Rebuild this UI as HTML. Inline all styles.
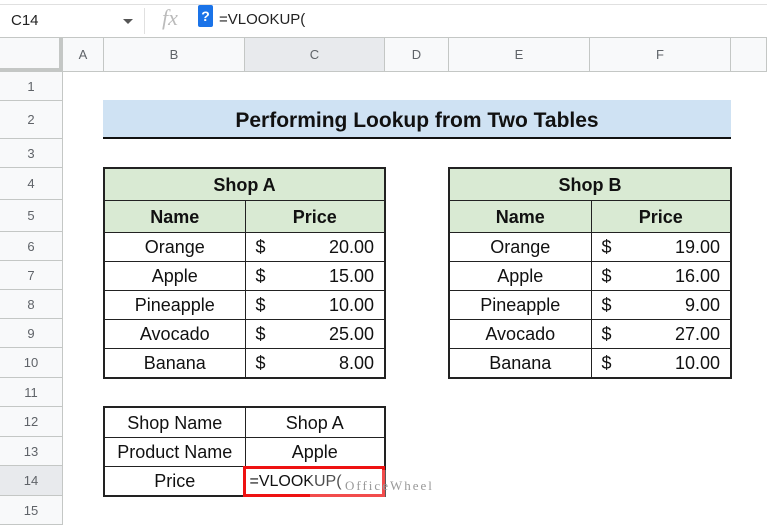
<!DOCTYPE html>
<html><head><style>
*{margin:0;padding:0;box-sizing:border-box}
body{width:767px;height:525px;overflow:hidden;background:#fff;font-family:"Liberation Sans",Arial,sans-serif;position:relative}
.a{position:absolute}
.rh{position:absolute;left:0;width:63px;background:#f8f9fa;border-bottom:1px solid #c4c7c5;border-right:1px solid #c4c7c5;color:#5f6368;font-size:13px;display:flex;align-items:center;justify-content:center}
.ch{position:absolute;top:38px;height:34px;background:#f8f9fa;border-right:1px solid #c4c7c5;border-bottom:1px solid #c4c7c5;color:#5f6368;font-size:13px;display:flex;align-items:center;justify-content:center}
table{position:absolute;border-collapse:collapse;font-size:18px;color:#111}
td{border:1px solid #222;text-align:center;padding:2px 0 0 0}
table{border:2px solid #222}
.g{background:#d9ead3;font-weight:bold}
.p{display:flex;justify-content:space-between;padding:0 10px 0 10px}
</style></head><body>
<div class="a" style="left:0;top:4px;width:767px;height:1px;background:#e0e0e0"></div>
<div class="a" style="left:0;top:37px;width:767px;height:1px;background:#c4c7c5"></div>
<div class="a" style="left:11px;top:12px;font-size:15px;color:#222">C14</div>
<div class="a" style="left:123px;top:19px;width:0;height:0;border-left:5px solid transparent;border-right:5px solid transparent;border-top:5px solid #555"></div>
<div class="a" style="left:144px;top:8px;width:1px;height:26px;background:#e0e0e0"></div>
<div class="a" style="left:162px;top:5px;font-size:22px;color:#bbb;font-family:'Liberation Serif',serif;font-style:italic">fx</div>
<div class="a" style="left:198px;top:5px;width:15px;height:22px;background:#1a73e8;border-radius:2px;color:#fff;font-size:14px;font-weight:bold;text-align:center;line-height:22px">?</div>
<div class="a" style="left:219px;top:11px;font-size:15px;color:#222">=VLOOKUP(</div>
<div class="a" style="left:0;top:38px;width:63px;height:34px;background:#f8f9fa;border-right:4px solid #c4c7c5;border-bottom:4px solid #c4c7c5"></div>
<div class="ch" style="left:63px;width:41px">A</div>
<div class="ch" style="left:104px;width:141px">B</div>
<div class="ch" style="left:245px;width:140px;background:#e8eaed">C</div>
<div class="ch" style="left:385px;width:64px">D</div>
<div class="ch" style="left:449px;width:141px">E</div>
<div class="ch" style="left:590px;width:141px">F</div>
<div class="ch" style="left:731px;width:36px"></div>
<div class="rh" style="top:72px;height:29px">1</div>
<div class="rh" style="top:101px;height:38px">2</div>
<div class="rh" style="top:139px;height:29px">3</div>
<div class="rh" style="top:168px;height:32px">4</div>
<div class="rh" style="top:200px;height:32px">5</div>
<div class="rh" style="top:232px;height:29px">6</div>
<div class="rh" style="top:261px;height:29px">7</div>
<div class="rh" style="top:290px;height:29px">8</div>
<div class="rh" style="top:319px;height:29px">9</div>
<div class="rh" style="top:348px;height:30px">10</div>
<div class="rh" style="top:378px;height:29px">11</div>
<div class="rh" style="top:407px;height:30px">12</div>
<div class="rh" style="top:437px;height:29px">13</div>
<div class="rh" style="top:466px;height:30px;background:#e8eaed">14</div>
<div class="rh" style="top:496px;height:29px">15</div>
<div class="a" style="left:103px;top:100px;width:628px;height:37px;background:#cfe2f3;font-weight:bold;font-size:21px;text-align:center;line-height:41px;color:#111">Performing Lookup from Two Tables</div>
<div class="a" style="left:103px;top:137px;width:628px;height:2px;background:#111"></div>

<table style="left:103px;top:167px;width:283px">
<tr style="height:32px"><td colspan="2" class="g">Shop A</td></tr>
<tr style="height:32px"><td class="g" style="width:141px">Name</td><td class="g">Price</td></tr>
<tr style="height:29px"><td>Orange</td><td><div class="p"><span>$</span><span>20.00</span></div></td></tr>
<tr style="height:29px"><td>Apple</td><td><div class="p"><span>$</span><span>15.00</span></div></td></tr>
<tr style="height:29px"><td>Pineapple</td><td><div class="p"><span>$</span><span>10.00</span></div></td></tr>
<tr style="height:29px"><td>Avocado</td><td><div class="p"><span>$</span><span>25.00</span></div></td></tr>
<tr style="height:30px"><td>Banana</td><td><div class="p"><span>$</span><span>8.00</span></div></td></tr>
</table>
<table style="left:448px;top:167px;width:284px">
<tr style="height:32px"><td colspan="2" class="g">Shop B</td></tr>
<tr style="height:32px"><td class="g" style="width:142px">Name</td><td class="g">Price</td></tr>
<tr style="height:29px"><td>Orange</td><td><div class="p"><span>$</span><span>19.00</span></div></td></tr>
<tr style="height:29px"><td>Apple</td><td><div class="p"><span>$</span><span>16.00</span></div></td></tr>
<tr style="height:29px"><td>Pineapple</td><td><div class="p"><span>$</span><span>9.00</span></div></td></tr>
<tr style="height:29px"><td>Avocado</td><td><div class="p"><span>$</span><span>27.00</span></div></td></tr>
<tr style="height:30px"><td>Banana</td><td><div class="p"><span>$</span><span>10.00</span></div></td></tr>
</table>
<table style="left:103px;top:406px;width:283px">
<tr style="height:30px"><td style="width:141px">Shop Name</td><td>Shop A</td></tr>
<tr style="height:29px"><td>Product Name</td><td>Apple</td></tr>
<tr style="height:30px"><td>Price</td><td style="text-align:left;padding-left:4px;font-size:16px">=VLOOKUP(</td></tr>
</table>
<div class="a" style="left:243px;top:466px;width:142px;height:31px;border:3px solid #ee1111"></div>
<div class="a" style="left:310px;top:470px;width:146px;height:30px;background:rgba(255,255,255,0.25)"></div>
<div class="a" style="left:345px;top:478px;font-size:13px;letter-spacing:2px;color:#999;font-family:'Liberation Serif',serif">OfficeWheel</div>
</body></html>
